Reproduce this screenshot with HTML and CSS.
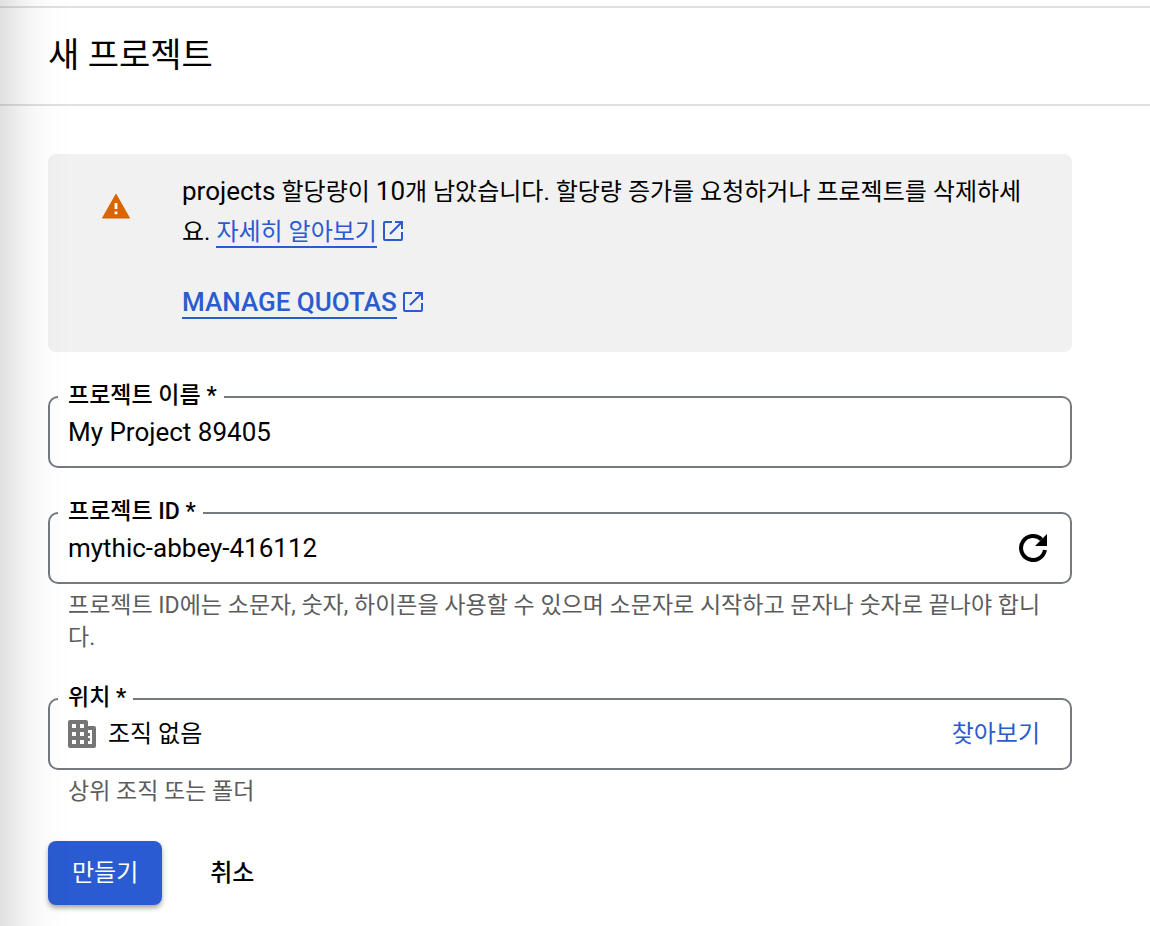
FILE: index.html
```html
<!DOCTYPE html>
<html lang="ko">
<head>
<meta charset="utf-8">
<meta name="viewport" content="width=device-width, initial-scale=1">
<title>새 프로젝트</title>
<link rel="stylesheet" href="styles.css">
</head>
<body>
<div class="edge-shade"></div>
<header class="page-header">
  <h1 class="page-title">새 프로젝트</h1>
</header>
<main class="content">
  <section class="notice">
    <svg class="notice-icon" viewBox="0 0 28 26" aria-hidden="true">
      <path fill="#d96500" stroke="#d96500" stroke-linejoin="round" d="M14 1.200 27.500 25H.5z"/>
      <path fill="#fff" d="M12.600 10h2.800v6h-2.800zM12.600 18.400h2.800v2.800h-2.800z"/>
    </svg>
    <div class="notice-body">
      <p class="notice-text"><span class="latin">projects</span> 할당량이 <span class="latin">10</span>개 남았습니다. 할당량 증가를 요청하거나 프로젝트를 삭제하세요. <a class="link" href="#learn"><span class="link-text">자세히 알아보기</span><svg class="external" viewBox="0 0 20 20" aria-hidden="true"><path fill="none" stroke="currentColor" stroke-width="2" d="M9 1H2Q1 1 1 2v16q0 1 1 1h16q1 0 1-1v-7M12 1h7v7M18.500 1.500 7 13"/></svg></a></p>
      <p class="notice-action"><a class="link link-strong" href="#quotas"><span class="link-text">MANAGE QUOTAS</span><svg class="external" viewBox="0 0 20 20" aria-hidden="true"><path fill="none" stroke="currentColor" stroke-width="2" d="M9 1H2Q1 1 1 2v16q0 1 1 1h16q1 0 1-1v-7M12 1h7v7M18.500 1.500 7 13"/></svg></a></p>
    </div>
  </section>
  <form class="form">
    <fieldset class="field">
      <legend class="field-legend"><label for="name">프로젝트 이름 *</label></legend>
      <div class="field-row"><input class="field-input" id="name" type="text" value="My Project 89405"></div>
    </fieldset>
    <div class="group">
      <fieldset class="field">
        <legend class="field-legend"><label for="pid">프로젝트 ID *</label></legend>
        <div class="field-row">
          <input class="field-input" id="pid" type="text" value="mythic-abbey-416112" aria-describedby="pid-hint">
          <button class="icon-button" type="button" aria-label="새로고침">
            <svg class="refresh" viewBox="0 0 28 28" aria-hidden="true"><path fill="none" stroke="#000" stroke-width="4" d="M25.900 16A12 12 0 1 1 22.600 5.600"/><path d="M28 0v12H16z"/></svg>
          </button>
        </div>
      </fieldset>
      <p class="hint" id="pid-hint">프로젝트 ID에는 소문자, 숫자, 하이픈을 사용할 수 있으며 소문자로 시작하고 문자나 숫자로 끝나야 합니다.</p>
    </div>
    <div class="group">
      <fieldset class="field">
        <legend class="field-legend"><label for="location">위치 *</label></legend>
        <div class="field-row">
          <svg class="org" viewBox="0 0 28 28" aria-hidden="true"><path fill="#757575" fill-rule="evenodd" d="M2 0h16q2 0 2 2v4h6q2 0 2 2v18q0 2-2 2H2q-2 0-2-2V2Q0 0 2 0zM4 4v4h4V4zM12 4v4h4V4zM4 12v4h4v-4zM12 12v4h4v-4zM4 20v4h4v-4zM12 20v4h4v-4zM20 10v3h2v3h-2v2h2v3h-2v3h4V10z"/></svg>
          <input class="field-input field-input-ko" id="location" type="text" value="조직 없음" readonly aria-describedby="location-hint">
          <button class="browse" type="button">찾아보기</button>
        </div>
      </fieldset>
      <p class="hint" id="location-hint">상위 조직 또는 폴더</p>
    </div>
    <div class="actions">
      <button class="button button-primary" type="submit">만들기</button>
      <button class="button" type="button">취소</button>
    </div>
  </form>
</main>
</body>
</html>
```
FILE: styles.css
```css
* { box-sizing: border-box; }

body {
  margin: 0;
  background: #fff;
  color: #000;
  font-family: Roboto, "Noto Sans CJK KR", sans-serif;
  font-size: 24px;
  line-height: 40px;
}

button, input { font-family: inherit; color: inherit; }

.latin { font-size: 26px; line-height: 32px; }

.edge-shade {
  position: fixed;
  top: 0;
  bottom: 0;
  left: 0;
  width: 72px;
  background: linear-gradient(to right, rgba(0, 0, 0, .12), rgba(0, 0, 0, .07) 24%, rgba(0, 0, 0, .03) 44%, rgba(0, 0, 0, .01) 66%, transparent);
  pointer-events: none;
  z-index: 1;
}

.page-header {
  margin-top: 6px;
  padding: 27px 48px 29px;
  border-top: 2px solid #e0e0e0;
  border-bottom: 2px solid #e0e0e0;
}

.page-title {
  margin: 0;
  font-size: 34px;
  font-weight: 400;
  line-height: 40px;
}

.content {
  max-width: 1150px;
  padding: 48px 78px 20px 48px;
}

.notice {
  display: flex;
  align-items: flex-start;
  gap: 52px;
  padding: 18px 32px 30px 54px;
  border-radius: 8px;
  background: #f1f1f1;
}

.notice-icon { flex: none; width: 28px; height: 26px; margin-top: 21px; }
.notice-body { flex: 1; min-width: 0; }
.notice-text { margin: 0 0 30px; }
.notice-action { margin: 0; font-size: 26px; }

.link { color: #2b5bd0; text-decoration: none; }
.link-text { border-bottom: 2px solid currentColor; }
.link-strong { font-weight: 500; }

.external {
  width: 20px;
  height: 20px;
  margin-left: 6px;
  vertical-align: -1px;
}

.form {
  display: flex;
  flex-direction: column;
  padding-top: 33px;
  gap: 33px;
}

.field {
  min-width: 0;
  margin: 0;
  padding: 7px 30px 18px 8px;
  border: 2px solid #757a80;
  border-radius: 10px;
}

.field-legend {
  padding: 0 7px 2px 10px;
  font-size: 23px;
  font-weight: 500;
  line-height: 22px;
}

.field-row {
  display: flex;
  align-items: center;
  gap: 12px;
  height: 32px;
  padding-left: 10px;
}

.field-input {
  flex: 1;
  min-width: 0;
  padding: 0;
  border: 0;
  outline: 0;
  background: transparent;
  font-size: 26px;
  line-height: 32px;
}

.field-input-ko { font-size: 24px; }

.icon-button {
  display: flex;
  margin-right: -7px;
  padding: 0;
  border: 0;
  background: none;
}

.refresh { width: 28px; height: 28px; }
.org { flex: none; width: 28px; height: 28px; }

.browse {
  padding: 0;
  border: 0;
  background: none;
  color: #2b5bd0;
  font-size: 24px;
  line-height: 32px;
}

.hint {
  margin: 6px 24px 0 20px;
  color: #5c5c5c;
  font-size: 23px;
  line-height: 32px;
}

.actions { display: flex; gap: 24px; }

.button {
  height: 64px;
  padding: 0 24px;
  border: 0;
  border-radius: 8px;
  background: none;
  font-size: 24px;
  font-weight: 500;
  line-height: 32px;
}

.button-primary {
  background: #2b5bd0;
  color: #fff;
  font-weight: 400;
  box-shadow: 0 3px 5px rgba(0, 0, 0, .35);
}
```
